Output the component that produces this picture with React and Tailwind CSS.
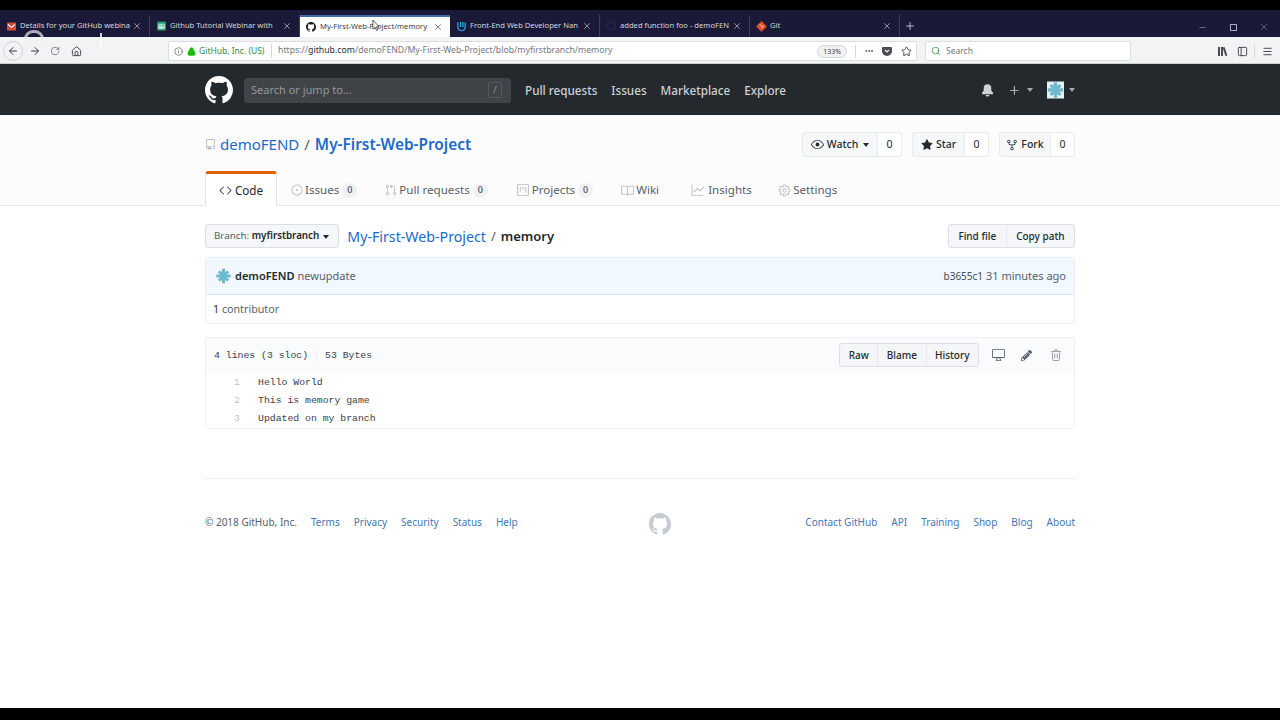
import { ArrowLeft, ArrowRight, RotateCw, Home, X, Plus, Info, Lock, Star, Search, Minus, Menu, PanelLeft, MoreHorizontal } from "lucide-react";
import { FaPencilAlt } from "react-icons/fa";
import {
    GoRepo, GoEye, GoStarFill, GoRepoForked, GoIssueOpened, GoGitPullRequest, GoProject, GoBook,
    GoGraph, GoGear, GoCode, GoBellFill, GoPlus, GoDeviceDesktop, GoTrash,
} from "react-icons/go";

const MARK = "M8 0C3.58 0 0 3.58 0 8c0 3.54 2.29 6.53 5.47 7.59.4.07.55-.17.55-.38 0-.19-.01-.82-.01-1.49-2.01.37-2.53-.49-2.69-.94-.09-.23-.48-.94-.82-1.13-.28-.15-.68-.52-.01-.53.63-.01 1.08.58 1.23.82.72 1.21 1.87.87 2.33.66.07-.52.28-.87.51-1.07-1.78-.2-3.64-.89-3.64-3.95 0-.87.31-1.59.82-2.15-.08-.2-.36-1.02.08-2.12 0 0 .67-.21 2.2.82.64-.18 1.32-.27 2-.27.68 0 1.36.09 2 .27 1.53-1.04 2.2-.82 2.2-.82.44 1.1.16 1.92.08 2.12.51.56.82 1.27.82 2.15 0 3.07-1.87 3.75-3.65 3.95.29.25.54.73.54 1.48 0 1.07-.01 1.93-.01 2.2 0 .21.15.46.55.38A8.013 8.013 0 0016 8c0-4.42-3.58-8-8-8z";

function GithubMark({ className }) {
    return (
        <svg viewBox="0 0 16 16" className={className} fill="currentColor">
            <path d={MARK} />
        </svg>
    );
}

function Avatar({ className, bg }) {
    return (
        <svg viewBox="0 0 20 20" className={className}>
            <rect width="20" height="20" fill={bg} />
            <path d="M8 1h4v4l3-2 2 3-3 2h5v4h-5l3 2-2 3-3-2v4H8v-4l-3 2-2-3 3-2H1V8h5L3 6l2-3 3 2z" fill="#6cb9d0" />
        </svg>
    );
}

function GmailIcon() {
    return (
        <svg viewBox="0 0 10 10" className="h-[9px] w-[9px] shrink-0">
            <rect width="10" height="9" y="0.5" rx="1" fill="#d3493b" />
            <path d="M1 2l4 3.2L9 2v1.5L5 6.7 1 3.5z" fill="#fff" />
        </svg>
    );
}

function SheetsIcon() {
    return (
        <svg viewBox="0 0 10 10" className="h-[10px] w-[9px] shrink-0">
            <rect width="10" height="10" rx="1" fill="#1f9d6b" />
            <path d="M2 3h6v5H2zM2 5.2h6M2 6.7h6M4.7 3v5" fill="none" stroke="#fff" strokeWidth="0.8" />
        </svg>
    );
}

function UdacityIcon() {
    return (
        <svg viewBox="0 0 12 12" className="h-[11px] w-[11px] shrink-0" fill="none" stroke="#2f9fd8" strokeWidth="1.5">
            <path d="M2 1.5v5c0 2 1.5 4 4 4s4-2 4-4v-5M5 1v5.5M7.5 1v5.5" />
        </svg>
    );
}

function GitIcon() {
    return (
        <svg viewBox="0 0 10 10" className="h-[11px] w-[11px] shrink-0">
            <path d="M5 0l5 5-5 5-5-5z" fill="#dc4c26" />
            <path d="M3.5 3l2 2v2M5.5 5l1.5-.5" stroke="#fff" strokeWidth="0.7" fill="none" />
        </svg>
    );
}

// titles end where the browser fades them out
const tabs = [
    { title: "Details for your GitHub webina", icon: <GmailIcon /> },
    { title: "Github Tutorial Webinar with", icon: <SheetsIcon /> },
    { title: "My-First-Web-Project/memory", icon: <GithubMark className="h-[10px] w-[10px] shrink-0 text-[#1b1f23]" />, active: true },
    { title: "Front-End Web Developer Nan", icon: <UdacityIcon /> },
    { title: "added function foo - demoFEN", icon: <GithubMark className="h-[10px] w-[10px] shrink-0 text-[#23234a]" /> },
    { title: "Git", icon: <GitIcon /> },
];

function BrowserTab({ tab }) {
    return (
        <div className={"flex h-[22px] w-[150px] items-center gap-[4px] pl-[6px] pr-[7px] " + (tab.active ? "border-t-2 border-[#3a6ea5] bg-white text-[#3c3c46]" : "border-r border-[#3c3c5c] text-[#d5d5df]")}>
            <span className="flex w-[10px] justify-center">{tab.icon}</span>
            <span className="min-w-0 flex-1 whitespace-nowrap text-[7.600px] leading-none">{tab.title}</span>
            <X className="h-[10px] w-[10px] shrink-0" strokeWidth={1.5} />
        </div>
    );
}

function TabStrip() {
    return (
        <div className="relative flex h-[27px] items-end bg-[#1a1a38] pt-[5px]">
            {tabs.map((t) => <BrowserTab key={t.title} tab={t} />)}
            <Plus className="mb-[5px] ml-[4px] h-[12px] w-[12px] self-end text-[#e4e4ec]" strokeWidth={1.5} />
            <div className="ml-auto mb-[5px] flex items-center pr-[11px] text-[#a9a9b8]">
                <Minus className="h-[9px] w-[9px]" strokeWidth={1.5} />
                <div className="ml-[23px] h-[7px] w-[7px] border border-[#a9a9b8]" />
                <X className="ml-[22px] h-[10px] w-[10px]" strokeWidth={1.2} />
            </div>
            {/* mouse pointer from the recording */}
            <svg viewBox="0 0 10 14" className="absolute left-[372px] top-[9px] h-[13px] w-[9px]">
                <path d="M1 1v10l2.5-2 1.5 3.5 1.500-.7L5 8.500h3z" fill="#fff" stroke="#222" strokeWidth="0.8" />
            </svg>
        </div>
    );
}

function Toolbar() {
    return (
        <div className="relative flex h-[27px] items-center border-b border-[#cfd0d2] bg-[#f2f3f4] pt-[2px] text-[#3d3d44]">
            <div className="flex w-[168px] shrink-0 items-center pl-[3px]">
                <span className="flex h-[20px] w-[20px] items-center justify-center rounded-full border border-[#d0d1d4]">
                    <ArrowLeft className="h-[12px] w-[12px]" />
                </span>
                <ArrowRight className="ml-[6px] h-[12px] w-[12px]" />
                <RotateCw className="ml-[9px] h-[10px] w-[10px] text-[#77777d]" />
                <Home className="ml-[11px] h-[11px] w-[11px]" />
            </div>
            <div className="flex h-[20px] w-[749px] items-center rounded-[2px] border border-[#dcdde0] bg-white pl-[5px] text-[8.500px]">
                <Info className="h-[9px] w-[9px] text-[#66666c]" />
                <Lock className="ml-[4px] h-[9px] w-[9px] text-[#12bc00]" fill="#12bc00" />
                <span className="ml-[3px] w-[68px] whitespace-nowrap text-[#2e8b3d]">GitHub, Inc. (US)</span>
                <span className="ml-[4px] h-[14px] w-px bg-[#d6d7d9]" />
                <span className="ml-[6px] whitespace-nowrap text-[8.730px] text-[#77777d]">https://<span className="text-[#2c2c30]">github.com</span>/demoFEND/My-First-Web-Project/blob/myfirstbranch/memory</span>
                <span className="ml-auto rounded-full border border-[#d6d7d9] bg-[#f1f1f2] px-[5px] text-[7px] leading-[11px]">133%</span>
                <span className="ml-[8px] h-[13px] w-px bg-[#d6d7d9]" />
                <MoreHorizontal className="ml-[8px] h-[10px] w-[10px]" />
                <svg viewBox="0 0 10 10" className="ml-[8px] h-[10px] w-[10px]">
                    <path d="M1 1h8a1 1 0 011 1v3a5 5 0 01-10 0V2a1 1 0 011-1z" fill="#4a4a4f" />
                    <path d="M3 4l2 2 2-2" stroke="#fff" strokeWidth="1.100" fill="none" />
                </svg>
                <Star className="ml-[9px] h-[11px] w-[11px]" />
                <span className="w-[4px]" />
            </div>
            <div className="ml-[8px] flex h-[20px] w-[206px] items-center rounded-[2px] border border-[#dcdde0] bg-white pl-[5px] text-[8.500px] text-[#77777d]">
                <Search className="h-[10px] w-[10px] text-[#3e9b4f]" />
                <span className="ml-[5px]">Search</span>
            </div>
            <div className="ml-auto flex items-center pr-[7px]">
                <span className="flex items-end gap-[1px]">
                    <span className="h-[9px] w-[2px] bg-[#4a4a4f]" />
                    <span className="h-[9px] w-[2px] bg-[#4a4a4f]" />
                    <span className="h-[9px] w-[2px] rotate-[-18deg] bg-[#4a4a4f]" />
                </span>
                <PanelLeft className="ml-[11px] h-[11px] w-[11px]" />
                <span className="ml-[6px] h-[14px] w-px bg-[#d6d7d9]" />
                <Menu className="ml-[7px] h-[11px] w-[11px]" />
            </div>
            {/* ghost of a fading title from the recording */}
            <span className="absolute left-[24px] top-[-7px] h-[18px] w-[20px] rounded-full border-[3px] border-b-0 border-[#eeeeee]/70" />
            <span className="absolute left-[100px] top-[-4px] h-[14px] w-[2px] bg-white/80" />
        </div>
    );
}

function GithubHeader() {
    const nav = ["Pull requests", "Issues", "Marketplace", "Explore"];
    return (
        <header className="flex h-[50px] shrink-0 justify-center bg-[#24292e]">
            <div className="flex w-[870px] items-center">
                <GithubMark className="h-[28px] w-[28px] text-white" />
                <div className="ml-[11px] flex h-[25px] w-[267px] items-center justify-between rounded-[3px] bg-[#404448] pl-[7px] pr-[9px] text-[11px] text-[#94979a]">
                    <span>Search or jump to...</span>
                    <span className="flex h-[16px] w-[14px] items-center justify-center rounded-[2px] border border-[#55595d] text-[9px]">/</span>
                </div>
                <nav className="ml-[14px] flex gap-[14px] pt-[1px] text-[11.700px] font-medium text-[#cfd0d2]">
                    {nav.map((n) => <span key={n}>{n}</span>)}
                </nav>
                <div className="ml-auto flex items-center text-[#d0d1d2]">
                    <GoBellFill className="h-[15px] w-[15px]" />
                    <GoPlus className="ml-[12px] h-[15px] w-[15px]" />
                    <span className="ml-[5px] h-0 w-0 border-x-[3px] border-t-[4px] border-x-transparent border-t-[#a8aaac]" />
                    <Avatar className="ml-[14px] h-[18px] w-[17px]" bg="#e4f1f6" />
                    <span className="ml-[5px] h-0 w-0 border-x-[3px] border-t-[4px] border-x-transparent border-t-[#a8aaac]" />
                </div>
            </div>
        </header>
    );
}

function Counter({ icon, label, count, caret, width }) {
    return (
        <div className="flex h-[25px] items-stretch text-[10.500px] text-[#24292e]">
            <span className={"flex items-center justify-center gap-[3px] rounded-l-[3px] border border-[#e8eaed] bg-[#f6f7f8] font-medium " + width}>
                {icon}{label}
                {caret && <span className="ml-[2px] h-0 w-0 border-x-[3px] border-t-[4px] border-x-transparent border-t-[#24292e]" />}
            </span>
            <span className="flex w-[24px] items-center justify-center rounded-r-[3px] border border-l-0 border-[#e8eaed] bg-white">{count}</span>
        </div>
    );
}

function RepoTab({ icon, label, count, active, width = "" }) {
    if (active) {
        return (
            <div className="relative z-10 mb-[-1px] flex h-[35px] w-[72px] items-center justify-center gap-[3px] rounded-t-[3px] border-x border-t-[3px] border-x-[#e1e4e8] border-t-[#e36209] bg-white pt-[1px] text-[11.700px] text-[#24292e]">
                {icon}{label}
            </div>
        );
    }
    return (
        <div className={"flex h-[30px] items-center gap-[2px] text-[11.600px] text-[#586069] " + width}>
            <span className="text-[#b4b9be]">{icon}</span>
            {label}
            {count !== undefined && <span className="ml-[1px] flex h-[15px] w-[15px] items-center justify-center rounded-full bg-[#eff1f3] text-[9px] font-medium text-[#444d56]">{count}</span>}
        </div>
    );
}

function RepoHead() {
    const ic = "h-[12px] w-[12px]";
    return (
        <div className="flex h-[91px] shrink-0 justify-center border-b border-[#e6e8eb] bg-[#fcfcfd]">
            <div className="flex w-[870px] flex-col">
                <div className="mt-[17px] flex h-[25px] items-center">
                    <GoRepo className="h-[13px] w-[11px] text-[#a3aab1]" />
                    <span className="ml-[4px] text-[15px] text-[#1b6ac9]">demoFEND</span>
                    <span className="mx-[5px] text-[15px] text-[#586069]">/</span>
                    <span className="text-[15.400px] font-semibold text-[#1b6ac9]">My-First-Web-Project</span>
                    <div className="ml-auto flex gap-[10px]">
                        <Counter width="w-[76px]" icon={<GoEye className="h-[13px] w-[13px]" />} label="Watch" count="0" caret />
                        <Counter width="w-[53px]" icon={<GoStarFill className={ic} />} label="Star" count="0" />
                        <Counter width="w-[52px]" icon={<GoRepoForked className={ic} />} label="Fork" count="0" />
                    </div>
                </div>
                <div className="mt-auto flex items-end">
                    <RepoTab active icon={<GoCode className="h-[13px] w-[13px]" />} label="Code" />
                    <div className="ml-[14px] flex gap-[28px]">
                        <RepoTab icon={<GoIssueOpened className={ic} />} label="Issues" count="0" />
                        <RepoTab icon={<GoGitPullRequest className={ic} />} label="Pull requests" count="0" />
                        <RepoTab icon={<GoProject className="h-[14px] w-[14px]" />} label="Projects" count="0" />
                        <RepoTab width="w-[41px]" icon={<GoBook className="h-[13px] w-[13px]" />} label="Wiki" />
                        <RepoTab width="w-[60px]" icon={<GoGraph className="h-[14px] w-[16px]" />} label="Insights" />
                        <RepoTab icon={<GoGear className="h-[13px] w-[13px]" />} label="Settings" />
                    </div>
                </div>
            </div>
        </div>
    );
}

function BtnGroup({ items, pad }) {
    return (
        <div className="flex h-[24px] overflow-hidden rounded-[3px] border border-[#dcdfe3] bg-[#f5f6f8] text-[10px] font-medium text-[#24292e]">
            {items.map((it, i) => (
                <span key={it} className={"flex items-center " + pad + (i > 0 ? " border-l border-[#e6e8eb]" : "")}>{it}</span>
            ))}
        </div>
    );
}

function CodeView() {
    const lines = ["Hello World", "This is memory game", "Updated on my branch"];
    const mono = { fontFamily: '"Liberation Mono", "DejaVu Sans Mono", monospace' };
    return (
        <div className="mt-[13px] rounded-[3px] border border-[#eff0f2]">
            <div className="flex h-[36px] items-center justify-between bg-[#fafbfc] pl-[8px] pr-[12px]">
                <div className="flex items-center text-[9.800px] text-[#3a4046]" style={mono}>
                    <span>4 lines (3 sloc)</span>
                    <span className="mx-[8px] h-[14px] w-px bg-[#eeeff1]" />
                    <span>53 Bytes</span>
                </div>
                <div className="mb-[2px] flex items-center">
                    <BtnGroup items={["Raw", "Blame", "History"]} pad="px-[8.500px]" />
                    <GoDeviceDesktop className="ml-[12px] h-[14px] w-[15px] text-[#586069]" />
                    <FaPencilAlt className="ml-[15px] h-[11px] w-[11px] text-[#586069]" />
                    <GoTrash className="ml-[18px] h-[13px] w-[12px] text-[#7d848b]" />
                </div>
            </div>
            <div className="text-[9.800px]" style={mono}>
                {lines.map((l, i) => (
                    <div key={l} className="flex h-[18px] items-center">
                        <span className="w-[35px] pr-[1px] text-right text-[#c0c4c8]">{i + 1}</span>
                        <span className="ml-[17px] text-[#3a4046]">{l}</span>
                    </div>
                ))}
            </div>
        </div>
    );
}

function FileContent() {
    return (
        <div className="mx-auto w-[870px]">
            <div className="mt-[18px] flex h-[24px] items-center">
                <div className="flex h-[24px] items-center rounded-[3px] border border-[#dcdfe3] bg-[#f5f6f8] pl-[8px] pr-[9px] pt-[1px] text-[9.800px] text-[#586069]">
                    Branch:&nbsp;<span className="font-semibold text-[#24292e]">myfirstbranch</span>
                    <span className="ml-[4px] h-0 w-0 border-x-[3px] border-t-[4px] border-x-transparent border-t-[#24292e]" />
                </div>
                <span className="ml-[8px] pt-[1px] text-[14.200px] text-[#1b6ac9]">My-First-Web-Project</span>
                <span className="mx-[5px] pt-[1px] text-[13px] text-[#586069]">/</span>
                <span className="pt-[1px] text-[13px] font-semibold text-[#24292e]">memory</span>
                <div className="ml-auto"><BtnGroup items={["Find file", "Copy path"]} pad="px-[9.500px]" /></div>
            </div>
            <div className="mt-[9px] overflow-hidden rounded-[3px] border border-[#e8eef4]">
                <div className="flex h-[37px] items-center justify-between border-b border-[#d5e3f0] bg-[#f1f8ff] pl-[9px] pr-[8px] text-[11px]">
                    <div className="flex items-center">
                        <Avatar className="h-[16px] w-[17px]" bg="#f1f8ff" />
                        <span className="ml-[3px] font-semibold text-[#24292e]">demoFEND</span>
                        <span className="ml-[3px] text-[#586069]">newupdate</span>
                    </div>
                    <div className="text-[#586069]">
                        <span className="text-[10px] text-[#444d56]">b3655c1</span> 31 minutes ago
                    </div>
                </div>
                <div className="flex h-[28px] items-center px-[7px] text-[10.700px] text-[#586069]">
                    <span className="text-[#24292e]">1</span>&nbsp;contributor
                </div>
            </div>
            <CodeView />
        </div>
    );
}

function Footer() {
    const left = ["Terms", "Privacy", "Security", "Status", "Help"];
    const right = ["Contact GitHub", "API", "Training", "Shop", "Blog", "About"];
    return (
        <footer className="mx-auto mt-[49px] w-[870px] border-t border-[#eaecef] pt-[32px] text-[10px]">
            <div className="flex h-[22px] items-center">
                <div className="flex w-[435px] items-center">
                    <span className="text-[#586069]">© 2018 GitHub, Inc.</span>
                    <div className="ml-[14px] flex gap-[14px] text-[#4078b4]">
                        {left.map((x) => <span key={x}>{x}</span>)}
                    </div>
                </div>
                <GithubMark className="ml-[9px] mt-[4px] h-[22px] w-[22px] text-[#c6cbd1]" />
                <div className="ml-auto flex gap-[14px] text-[#4078b4]">
                    {right.map((x) => <span key={x}>{x}</span>)}
                </div>
            </div>
        </footer>
    );
}

export default function App() {
    return (
        <div className="flex h-[720px] w-[1280px] flex-col overflow-hidden bg-white" style={{ fontFamily: '"Noto Sans", "Open Sans", sans-serif' }}>
            <div className="h-[10px] shrink-0 bg-black" />
            <TabStrip />
            <Toolbar />
            <div className="h-[1px] shrink-0 bg-[#24292e]" />
            <GithubHeader />
            <RepoHead />
            <main className="min-h-0 flex-1">
                <FileContent />
                <Footer />
            </main>
            <div className="h-[12px] shrink-0 bg-black" />
        </div>
    );
}
